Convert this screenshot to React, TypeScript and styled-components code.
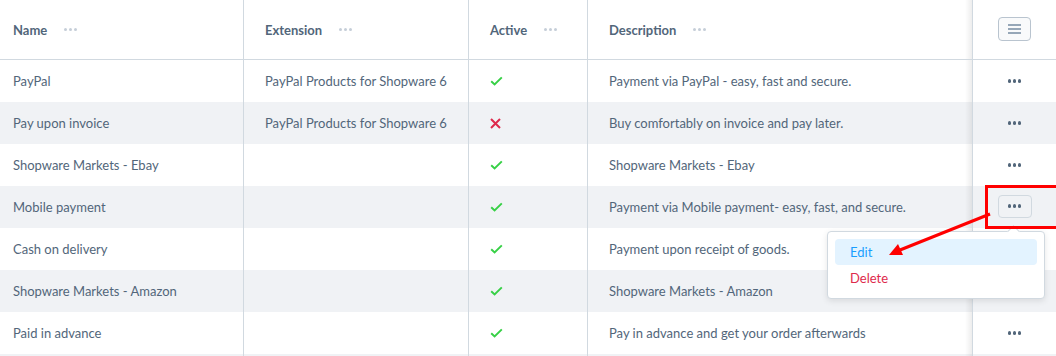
import React from 'react';
import styled, { createGlobalStyle } from 'styled-components';

const GlobalStyle = createGlobalStyle`
  html, body {
    margin: 0;
    padding: 0;
    background: #ffffff;
    overflow: hidden;
  }
  body {
    font-family: Lato, "Open Sans", sans-serif;
    color: #52667a;
  }
`;

const Page = styled.div`
  position: relative;
  width: 1056px;
  height: 356px;
  overflow: hidden;
`;

const Grid = styled.div`
  display: grid;
  grid-template-columns: 243px 225px 119px 385px 84px;
  grid-auto-rows: 42px;
  grid-template-rows: 60px;
`;

const HeadCell = styled.div<{ $first?: boolean; $last?: boolean }>`
  position: relative;
  display: flex;
  align-items: center;
  justify-content: ${(p) => (p.$last ? 'center' : 'flex-start')};
  gap: 17px;
  padding-left: ${(p) => (p.$last ? '0' : p.$first ? '13px' : '21px')};
  border-left: ${(p) => (p.$first ? 'none' : '1px solid #d1d9e0')};
  border-bottom: 1px solid #d1d9e0;
  font-size: 13px;
  font-weight: 700;
  color: #52667a;
  background: #ffffff;
  ${(p) => p.$last && `
    &::before {
      content: '';
      position: absolute;
      top: 0;
      bottom: 0;
      left: -8px;
      width: 7px;
      background: linear-gradient(to right, rgba(0,0,0,0), rgba(0,0,0,0.07));
    }
  `}
`;

const Cell = styled.div<{ $striped: boolean; $first?: boolean; $last?: boolean }>`
  position: relative;
  display: flex;
  align-items: center;
  justify-content: ${(p) => (p.$last ? 'center' : 'flex-start')};
  padding-left: ${(p) => (p.$last ? '0' : p.$first ? '13px' : '21px')};
  border-left: ${(p) => (p.$first ? 'none' : '1px solid #d1d9e0')};
  background: ${(p) => (p.$striped ? '#f0f2f5' : '#ffffff')};
  font-size: 13px;
  color: #52667a;
  white-space: nowrap;
  ${(p) => p.$last && `
    &::before {
      content: '';
      position: absolute;
      top: 0;
      bottom: 0;
      left: -8px;
      width: 7px;
      background: linear-gradient(to right, rgba(0,0,0,0), rgba(0,0,0,0.07));
    }
  `}
`;

const HeadDots = styled.span`
  display: inline-flex;
  gap: 2px;
  & > i {
    width: 3px;
    height: 3px;
    border-radius: 50%;
    background: #c5ced8;
  }
`;

const RowDots = styled.span<{ $boxed?: boolean }>`
  display: inline-flex;
  align-items: center;
  justify-content: center;
  gap: 1.5px;
  width: ${(p) => (p.$boxed ? '32px' : 'auto')};
  height: ${(p) => (p.$boxed ? '21px' : 'auto')};
  border: ${(p) => (p.$boxed ? '1px solid #d1d9e0' : 'none')};
  border-radius: 4px;
  background: ${(p) => (p.$boxed ? '#f0f2f5' : 'transparent')};
  margin-top: ${(p) => (p.$boxed ? '-2px' : '0')};
  & > i {
    width: 3.5px;
    height: 3.5px;
    border-radius: 50%;
    background: #52667a;
  }
`;

const SettingsButton = styled.button`
  display: flex;
  align-items: center;
  justify-content: center;
  width: 33px;
  height: 24px;
  margin-top: -2px;
  padding: 0;
  border: 1px solid #b9c4cf;
  border-radius: 4px;
  background: #f9fafb;
`;

const ContextMenu = styled.div`
  position: absolute;
  left: 827px;
  top: 231px;
  width: 202px;
  padding: 7px;
  background: #ffffff;
  border: 1px solid #d1d9e0;
  border-radius: 4px;
  box-shadow: 0 2px 6px rgba(0, 0, 0, 0.1);
  &::before {
    content: '';
    position: absolute;
    top: -5px;
    left: 181px;
    width: 8px;
    height: 8px;
    background: #ffffff;
    border-left: 1px solid #d1d9e0;
    border-top: 1px solid #d1d9e0;
    transform: rotate(45deg);
  }
`;

const MenuItem = styled.div<{ $active?: boolean; $danger?: boolean }>`
  display: flex;
  align-items: center;
  height: 26px;
  padding-left: 15px;
  border-radius: 4px;
  font-size: 13px;
  background: ${(p) => (p.$active ? '#e3f3ff' : 'transparent')};
  color: ${(p) => (p.$danger ? '#de294c' : '#189eff')};
`;

const Highlight = styled.div`
  position: absolute;
  left: 985px;
  top: 185px;
  width: 80px;
  height: 38px;
  border: 3px solid #ff0000;
  pointer-events: none;
`;

const ArrowLayer = styled.svg`
  position: absolute;
  left: 0;
  top: 0;
  pointer-events: none;
`;

type Row = {
  name: string;
  extension: string;
  active: boolean;
  description: string;
};

const rows: Row[] = [
  { name: 'PayPal', extension: 'PayPal Products for Shopware 6', active: true, description: 'Payment via PayPal - easy, fast and secure.' },
  { name: 'Pay upon invoice', extension: 'PayPal Products for Shopware 6', active: false, description: 'Buy comfortably on invoice and pay later.' },
  { name: 'Shopware Markets - Ebay', extension: '', active: true, description: 'Shopware Markets - Ebay' },
  { name: 'Mobile payment', extension: '', active: true, description: 'Payment via Mobile payment- easy, fast, and secure.' },
  { name: 'Cash on delivery', extension: '', active: true, description: 'Payment upon receipt of goods.' },
  { name: 'Shopware Markets - Amazon', extension: '', active: true, description: 'Shopware Markets - Amazon' },
  { name: 'Paid in advance', extension: '', active: true, description: 'Pay in advance and get your order afterwards' }
];

const Dots3 = () => (<><i /><i /><i /></>);

const CheckIcon = () => (
  <svg width="13" height="10" viewBox="0 0 13 10">
    <path d="M1.2 5.2 L4.6 8.4 L11.8 1.4" fill="none" stroke="#37d046" strokeWidth="2" />
  </svg>
);

const CrossIcon = () => (
  <svg width="11" height="11" viewBox="0 0 11 11">
    <path d="M1 1 L10 10 M10 1 L1 10" fill="none" stroke="#de294c" strokeWidth="2" />
  </svg>
);

const MenuIcon = () => (
  <svg width="13" height="10" viewBox="0 0 13 10">
    <path d="M0 1 H13 M0 5 H13 M0 9 H13" stroke="#758ca3" strokeWidth="1.6" />
  </svg>
);

const App: React.FC = () => (
  <Page>
    <GlobalStyle />
    <Grid>
      <HeadCell $first>Name<HeadDots><Dots3 /></HeadDots></HeadCell>
      <HeadCell>Extension<HeadDots><Dots3 /></HeadDots></HeadCell>
      <HeadCell>Active<HeadDots><Dots3 /></HeadDots></HeadCell>
      <HeadCell>Description<HeadDots><Dots3 /></HeadDots></HeadCell>
      <HeadCell $last>
        <SettingsButton><MenuIcon /></SettingsButton>
      </HeadCell>
      {rows.map((row, i) => {
        const striped = i % 2 === 1;
        return (
          <React.Fragment key={row.name}>
            <Cell $striped={striped} $first>{row.name}</Cell>
            <Cell $striped={striped}>{row.extension}</Cell>
            <Cell $striped={striped}>{row.active ? <CheckIcon /> : <CrossIcon />}</Cell>
            <Cell $striped={striped}>{row.description}</Cell>
            <Cell $striped={striped} $last>
              {(i === 4 || i === 5) ? null : (
                <RowDots $boxed={i === 3}><Dots3 /></RowDots>
              )}
            </Cell>
          </React.Fragment>
        );
      })}
      <Cell $striped $first />
      <Cell $striped />
      <Cell $striped />
      <Cell $striped />
      <Cell $striped $last />
    </Grid>
    <ContextMenu>
      <MenuItem $active>Edit</MenuItem>
      <MenuItem $danger>Delete</MenuItem>
    </ContextMenu>
    <Highlight />
    <ArrowLayer width="1056" height="356" viewBox="0 0 1056 356">
      <line x1="990" y1="214" x2="900" y2="250" stroke="#ff0000" strokeWidth="3" />
      <polygon points="889,255 898,244 903,255" fill="#ff0000" />
    </ArrowLayer>
  </Page>
);

export default App;
